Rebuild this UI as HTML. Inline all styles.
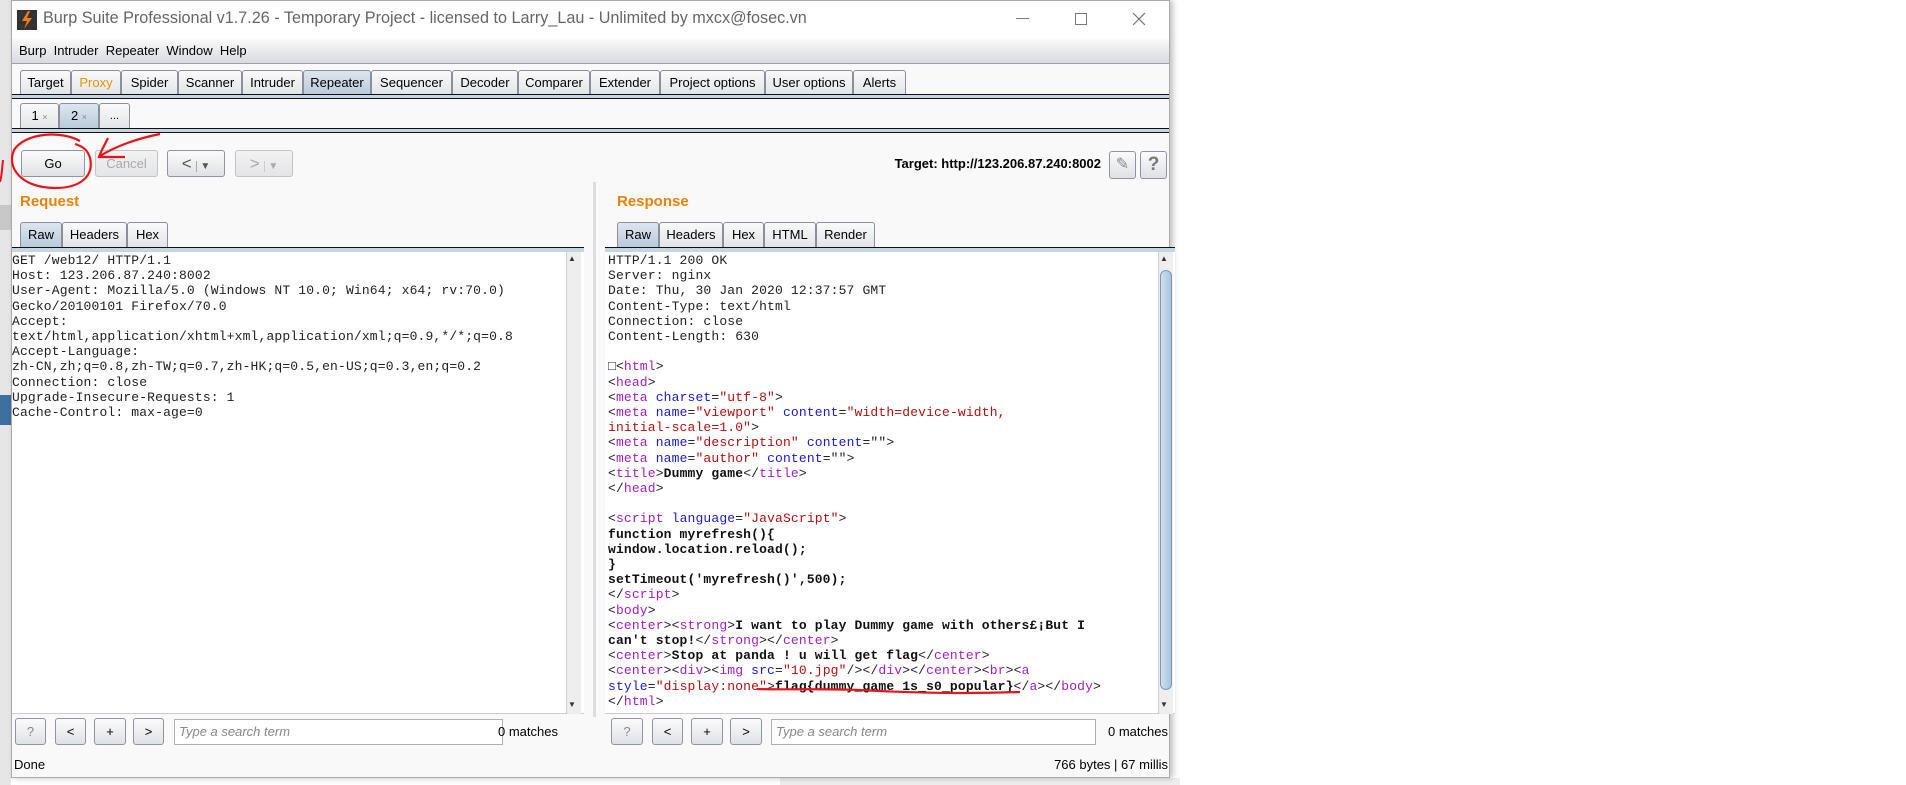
<!DOCTYPE html>
<html><head><meta charset="utf-8"><style>
*{margin:0;padding:0;box-sizing:border-box}
body{width:1906px;height:785px;background:#fff;position:relative;overflow:hidden;font-family:"Liberation Sans",sans-serif;font-size:13px;color:#000}
.a{position:absolute;white-space:nowrap}
.win{left:11px;top:0;width:1159px;height:778px;background:#f9f9f9;border:1px solid #aaa;box-shadow:3px 0 6px rgba(0,0,0,.25)}
.tab{position:absolute;top:70px;height:25px;border:1px solid #8a8f99;border-bottom:none;border-radius:3px 3px 0 0;background:linear-gradient(#fafafa,#e2e4e8);text-align:center;line-height:24px;font-size:13px}
.sel{background:linear-gradient(#dde6ef,#b9cadb)}
.btn{position:absolute;border:1px solid #8f959e;border-radius:3px;background:linear-gradient(#fbfbfb,#dfe1e5);text-align:center;font-size:13px}
.dis{color:#a9a9a9;border-color:#c0c3c8;background:linear-gradient(#f2f2f2,#e4e5e8)}
.code{position:absolute;font-family:"Liberation Mono",monospace;font-size:13px;letter-spacing:0.15px;line-height:15.2px;white-space:pre;color:#222}
.t{color:#a020c0}.n{color:#1a1ad0}.v{color:#b01010}b{font-weight:bold;color:#111}
.lbl{position:absolute;color:#e8820c;font-weight:bold;font-size:15px}
.sb{position:absolute;width:15px;background:#eee;border-left:1px solid #ccc}
.inp{position:absolute;border:1px solid #b0b0b0;background:#fff;color:#888;font-style:italic;font-size:13px;padding-left:4px;line-height:24px}
</style></head><body>
<div class="a" style="left:0;top:0;width:11px;height:785px;background:#e6e6e6"></div>
<div class="a" style="left:0;top:395px;width:11px;height:30px;background:#3d6fa0"></div>
<div class="a" style="left:0;top:205px;width:11px;height:25px;background:#c8c8c8"></div>
<div class="a" style="left:780px;top:778px;width:400px;height:7px;background:#eee"></div>
<div class="a win">
</div>
<!-- title -->
<div class="a" style="left:12px;top:1px;width:1157px;height:38px;background:#fff"></div>
<svg class="a" style="left:17px;top:10px" width="20" height="20"><rect width="20" height="20" fill="#333"/><path d="M11 1 L5 11 L10 11 L7 19 L15 8 L10 8 L13 1Z" fill="#f07c1c"/></svg>
<div class="a" style="left:43px;top:9px;font-size:16.2px;color:#666">Burp Suite Professional v1.7.26 - Temporary Project - licensed to Larry_Lau - Unlimited by mxcx@fosec.vn</div>
<div class="a" style="left:1016px;top:18px;width:13px;height:1px;background:#777"></div>
<div class="a" style="left:1075px;top:13px;width:12px;height:12px;border:1px solid #777"></div>
<svg class="a" style="left:1132px;top:12px" width="14" height="14"><path d="M1 1L13 13M13 1L1 13" stroke="#777" stroke-width="1.2"/></svg>
<!-- menu -->
<div class="a" style="left:12px;top:39px;width:1157px;height:25px;background:linear-gradient(#fafafa,#d8dadf);border-bottom:1px solid #9aa0a8"></div>
<div class="a" style="left:19px;top:43px;font-size:13px">Burp&nbsp; Intruder&nbsp; Repeater&nbsp; Window&nbsp; Help</div>
<!-- main tabs -->
<div class="tab" style="left:20px;width:51px">Target</div>
<div class="tab" style="left:71px;width:50px;color:#e8920c">Proxy</div>
<div class="tab" style="left:121px;width:57px">Spider</div>
<div class="tab" style="left:178px;width:64px">Scanner</div>
<div class="tab" style="left:242px;width:61px">Intruder</div>
<div class="tab sel" style="left:303px;width:68px">Repeater</div>
<div class="tab" style="left:371px;width:81px">Sequencer</div>
<div class="tab" style="left:452px;width:66px">Decoder</div>
<div class="tab" style="left:518px;width:72px">Comparer</div>
<div class="tab" style="left:590px;width:70px">Extender</div>
<div class="tab" style="left:660px;width:105px">Project options</div>
<div class="tab" style="left:765px;width:88px">User options</div>
<div class="tab" style="left:853px;width:53px">Alerts</div>
<div class="a" style="left:12px;top:94px;width:1157px;height:5px;background:#c6d4e3;border-top:1px solid #111;border-bottom:1px solid #111"></div>
<!-- sub tabs -->
<div class="tab" style="top:103px;left:20px;width:39px;height:26px">1 <span style="font-size:9px;color:#888">×</span></div>
<div class="tab sel" style="top:103px;left:59px;width:40px;height:26px">2 <span style="font-size:9px;color:#888">×</span></div>
<div class="tab" style="top:103px;left:99px;width:31px;height:26px;font-size:11px">...</div>
<div class="a" style="left:12px;top:128px;width:1157px;height:5px;background:#c6d4e3;border-top:1px solid #111;border-bottom:1px solid #111"></div>
<!-- toolbar -->
<div class="btn" style="left:21px;top:150px;width:64px;height:27px;line-height:25px">Go</div>
<div class="btn dis" style="left:95px;top:150px;width:63px;height:27px;line-height:25px">Cancel</div>
<div class="btn" style="left:167px;top:150px;width:58px;height:27px;line-height:25px;color:#555;font-size:17px">&lt; <span style="font-size:10px;border-left:1px solid #aaa;padding-left:3px">▼</span></div>
<div class="btn dis" style="left:235px;top:150px;width:58px;height:27px;line-height:25px;font-size:17px">&gt; <span style="font-size:10px;border-left:1px solid #ccc;padding-left:3px">▼</span></div>
<div class="a" style="left:850px;top:156px;width:251px;text-align:right;font-weight:bold;font-size:13px">Target: http://123.206.87.240:8002</div>
<div class="btn" style="left:1109px;top:151px;width:27px;height:28px;color:#888;font-size:16px;line-height:26px">✎</div>
<div class="btn" style="left:1140px;top:151px;width:27px;height:28px;color:#777;font-size:19px;font-weight:bold;line-height:26px">?</div>
<!-- divider -->
<div class="a" style="left:593px;top:182px;width:3px;height:535px;background:#dcdde2"></div>
<!-- request -->
<div class="lbl" style="left:20px;top:193px">Request</div>
<div class="tab sel" style="top:222px;left:20px;width:42px">Raw</div>
<div class="tab" style="top:222px;left:62px;width:65px">Headers</div>
<div class="tab" style="top:222px;left:127px;width:41px">Hex</div>
<div class="a" style="left:12px;top:247px;width:572px;height:5px;background:#c6d4e3;border-top:1px solid #111"></div>
<div class="a" style="left:12px;top:252px;width:572px;height:462px;background:#fff;border-bottom:1px solid #ccc"></div>
<div class="sb" style="left:566px;top:252px;height:462px"></div>
<div class="a" style="left:568px;top:254px;font-size:8px;color:#333">▲</div>
<div class="a" style="left:568px;top:700px;font-size:8px;color:#333">▼</div>
<div class="code" style="left:12px;top:253px">GET /web12/ HTTP/1.1
Host: 123.206.87.240:8002
User-Agent: Mozilla/5.0 (Windows NT 10.0; Win64; x64; rv:70.0)
Gecko/20100101 Firefox/70.0
Accept:
text/html,application/xhtml+xml,application/xml;q=0.9,*/*;q=0.8
Accept-Language:
zh-CN,zh;q=0.8,zh-TW;q=0.7,zh-HK;q=0.5,en-US;q=0.3,en;q=0.2
Connection: close
Upgrade-Insecure-Requests: 1
Cache-Control: max-age=0</div>
<!-- response -->
<div class="lbl" style="left:617px;top:193px">Response</div>
<div class="tab sel" style="top:222px;left:617px;width:42px">Raw</div>
<div class="tab" style="top:222px;left:659px;width:64px">Headers</div>
<div class="tab" style="top:222px;left:723px;width:41px">Hex</div>
<div class="tab" style="top:222px;left:764px;width:52px">HTML</div>
<div class="tab" style="top:222px;left:816px;width:59px">Render</div>
<div class="a" style="left:605px;top:247px;width:570px;height:5px;background:#c6d4e3;border-top:1px solid #111"></div>
<div class="a" style="left:605px;top:252px;width:570px;height:462px;background:#fff;border-bottom:1px solid #ccc"></div>
<div class="sb" style="left:1158px;top:252px;height:462px"></div>
<div class="a" style="left:1160px;top:270px;width:12px;height:420px;background:linear-gradient(90deg,#cfe0f0,#a9c3dc);border:1px solid #7d97b0;border-radius:6px"></div>
<div class="a" style="left:1160px;top:254px;font-size:8px;color:#333">▲</div>
<div class="a" style="left:1160px;top:700px;font-size:8px;color:#333">▼</div>
<div class="code" style="left:608px;top:253px">HTTP/1.1 200 OK
Server: nginx
Date: Thu, 30 Jan 2020 12:37:57 GMT
Content-Type: text/html
Connection: close
Content-Length: 630

□&lt;<span class="t">html</span>&gt;
&lt;<span class="t">head</span>&gt;
&lt;<span class="t">meta</span> <span class="n">charset</span>=<span class="v">"utf-8"</span>&gt;
&lt;<span class="t">meta</span> <span class="n">name</span>=<span class="v">"viewport"</span> <span class="n">content</span>=<span class="v">"width=device-width,
initial-scale=1.0"</span>&gt;
&lt;<span class="t">meta</span> <span class="n">name</span>=<span class="v">"description"</span> <span class="n">content</span>=""&gt;
&lt;<span class="t">meta</span> <span class="n">name</span>=<span class="v">"author"</span> <span class="n">content</span>=""&gt;
&lt;<span class="t">title</span>&gt;<b>Dummy game</b>&lt;/<span class="t">title</span>&gt;
&lt;/<span class="t">head</span>&gt;

&lt;<span class="t">script</span> <span class="n">language</span>=<span class="v">"JavaScript"</span>&gt;
<b>function myrefresh(){
window.location.reload();
}
setTimeout('myrefresh()',500);</b>
&lt;/<span class="t">script</span>&gt;
&lt;<span class="t">body</span>&gt;
&lt;<span class="t">center</span>&gt;&lt;<span class="t">strong</span>&gt;<b>I want to play Dummy game with others£¡But I
can't stop!</b>&lt;/<span class="t">strong</span>&gt;&lt;/<span class="t">center</span>&gt;
&lt;<span class="t">center</span>&gt;<b>Stop at panda ! u will get flag</b>&lt;/<span class="t">center</span>&gt;
&lt;<span class="t">center</span>&gt;&lt;<span class="t">div</span>&gt;&lt;<span class="t">img</span> <span class="n">src</span>=<span class="v">"10.jpg"</span>/&gt;&lt;/<span class="t">div</span>&gt;&lt;/<span class="t">center</span>&gt;&lt;<span class="t">br</span>&gt;&lt;<span class="t">a</span>
<span class="n">style</span>=<span class="v">"display:none"</span>&gt;<b>flag{dummy_game_1s_s0_popular}</b>&lt;/<span class="t">a</span>&gt;&lt;/<span class="t">body</span>&gt;
&lt;/<span class="t">html</span>&gt;</div>
<!-- search bars -->
<div class="btn" style="left:15px;top:718px;width:31px;height:27px;line-height:25px;color:#888">?</div>
<div class="btn" style="left:55px;top:718px;width:31px;height:27px;line-height:25px">&lt;</div>
<div class="btn" style="left:94px;top:718px;width:32px;height:27px;line-height:25px">+</div>
<div class="btn" style="left:133px;top:718px;width:31px;height:27px;line-height:25px">&gt;</div>
<div class="inp" style="left:174px;top:719px;width:329px;height:26px">Type a search term</div>
<div class="a" style="left:490px;top:724px;width:68px;text-align:right">0 matches</div>
<div class="btn" style="left:611px;top:718px;width:32px;height:27px;line-height:25px;color:#888">?</div>
<div class="btn" style="left:652px;top:718px;width:31px;height:27px;line-height:25px">&lt;</div>
<div class="btn" style="left:691px;top:718px;width:32px;height:27px;line-height:25px">+</div>
<div class="btn" style="left:730px;top:718px;width:32px;height:27px;line-height:25px">&gt;</div>
<div class="inp" style="left:771px;top:719px;width:325px;height:26px">Type a search term</div>
<div class="a" style="left:1100px;top:724px;width:68px;text-align:right">0 matches</div>
<!-- status -->
<div class="a" style="left:14px;top:757px">Done</div>
<div class="a" style="left:1000px;top:757px;width:168px;text-align:right">766 bytes | 67 millis</div>
<!-- annotations -->
<svg class="a" style="left:0;top:0" width="1906" height="785">
<path d="M80 141 C60 130 25 133 14 150 C6 168 22 188 55 188 C82 188 94 175 90 158 C88 150 82 146 75 144" fill="none" stroke="#e8141c" stroke-width="2.2"/>
<path d="M160 134 C140 138 118 145 100 156 M108 138 C104 146 101 151 99 157 L125 157" fill="none" stroke="#e8141c" stroke-width="2.2"/>
<path d="M3 160 C2 168 2 175 0 182" fill="none" stroke="#e8141c" stroke-width="2"/>
<path d="M757 689 C800 690 830 688 880 691 C920 693 960 694 1020 692" fill="none" stroke="#e8141c" stroke-width="2.2"/>
</svg>
</body></html>
